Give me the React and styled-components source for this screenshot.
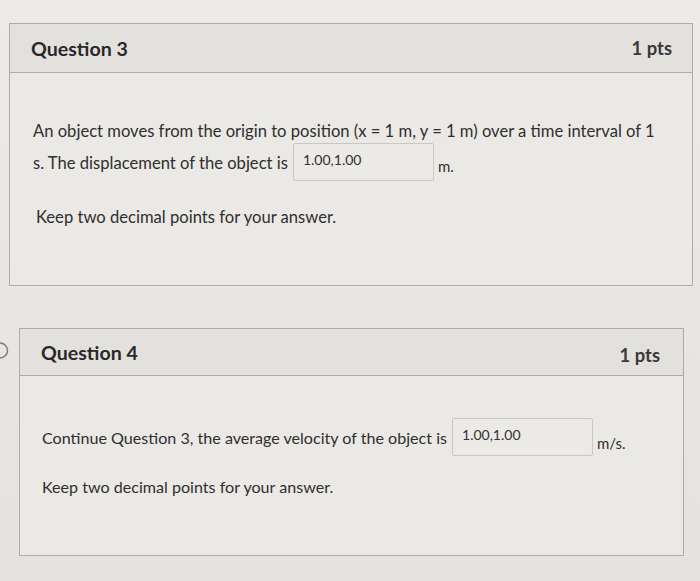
import React from "react";
import styled, { createGlobalStyle } from "styled-components";

const GlobalStyle = createGlobalStyle`
  html, body {
    margin: 0;
    padding: 0;
    background: #e8e6e2;
  }
  body {
    font-family: Lato, "Liberation Sans", sans-serif;
    color: #2e2c2c;
  }
`;

const Page = styled.div`
  position: relative;
  width: 700px;
  height: 581px;
  overflow: hidden;
  padding-top: 23px;
  box-sizing: border-box;
  background: linear-gradient(180deg, #ecebe7 0%, #e8e6e2 55%, #e5e3df 100%);
`;

const Card = styled.div`
  margin-left: ${(p) => p.$left}px;
  width: ${(p) => p.$width}px;
  margin-top: ${(p) => p.$top || 0}px;
  border: 1px solid #aeaca8;
  box-sizing: border-box;
  background: #ebe9e5;
`;

const Header = styled.div`
  height: ${(p) => p.$height}px;
  box-sizing: border-box;
  display: flex;
  align-items: center;
  justify-content: space-between;
  padding: 0 ${(p) => p.$padRight}px 0 ${(p) => p.$padLeft}px;
  background: #e3e1dd;
  border-bottom: 1px solid #aeaca8;
`;

const Title = styled.h2`
  margin: 0;
  font-size: 19.6px;
  font-weight: 700;
  color: #2a2828;
`;

const Points = styled.span`
  font-size: 18.4px;
  font-weight: 700;
  color: #3a3838;
  margin-top: ${(p) => p.$drop || 0}px;
`;

const Body = styled.div`
  padding: ${(p) => p.$padTop}px 20px ${(p) => p.$padBottom}px ${(p) => p.$padLeft}px;
  font-size: ${(p) => p.$size}px;
  color: #302e2e;
`;

const Text = styled.p`
  margin: 0;
  line-height: 24px;
  white-space: nowrap;
`;

const Note = styled.p`
  margin: ${(p) => p.$gap}px 0 0 ${(p) => p.$indent || 0}px;
  line-height: 24px;
`;

const Answer = styled.span`
  display: inline-flex;
  align-items: flex-start;
  vertical-align: 4px;
  width: 141px;
  height: 38px;
  box-sizing: border-box;
  margin: 0 4px 0 5px;
  padding: 7px 0 0 9px;
  border: 1px solid #c9c7c3;
  border-radius: 2px;
  background: #eceae6;
  font-size: 14px;
  line-height: 17px;
  color: #333131;
`;

const Unit = styled.span`
  vertical-align: ${(p) => p.$shift}px;
  font-size: 15px;
`;

const Marker = styled.svg`
  position: absolute;
  left: -9px;
  top: 342px;
`;

export default function App() {
  return (
    <Page>
      <GlobalStyle />
      <Card $left={9} $width={684}>
        <Header $height={49} $padLeft={21} $padRight={20}>
          <Title>Question 3</Title>
          <Points>1 pts</Points>
        </Header>
        <Body $padTop={46} $padBottom={56} $padLeft={23} $size={16.6}>
          <Text>
            An object moves from the origin to position (x = 1 m, y = 1 m) over a time interval of 1
          </Text>
          <Text>
            s. The displacement of the object is<Answer>1.00,1.00</Answer>
            <Unit $shift={-3}>m.</Unit>
          </Text>
          <Note $gap={24} $indent={3}>Keep two decimal points for your answer.</Note>
        </Body>
      </Card>

      <Marker width="18" height="17" viewBox="0 0 18 17">
        <circle cx="9" cy="8.5" r="7.5" fill="none" stroke="#7d7b78" strokeWidth="1.5" />
      </Marker>

      <Card $left={19} $width={665} $top={42}>
        <Header $height={47} $padLeft={21} $padRight={23}>
          <Title>Question 4</Title>
          <Points $drop={6}>1 pts</Points>
        </Header>
        <Body $padTop={42} $padBottom={56} $padLeft={22} $size={16.1}>
          <Text>
            Continue Question 3, the average velocity of the object is<Answer>1.00,1.00</Answer>
            <Unit $shift={-5}>m/s.</Unit>
          </Text>
          <Note $gap={19}>Keep two decimal points for your answer.</Note>
        </Body>
      </Card>
    </Page>
  );
}
